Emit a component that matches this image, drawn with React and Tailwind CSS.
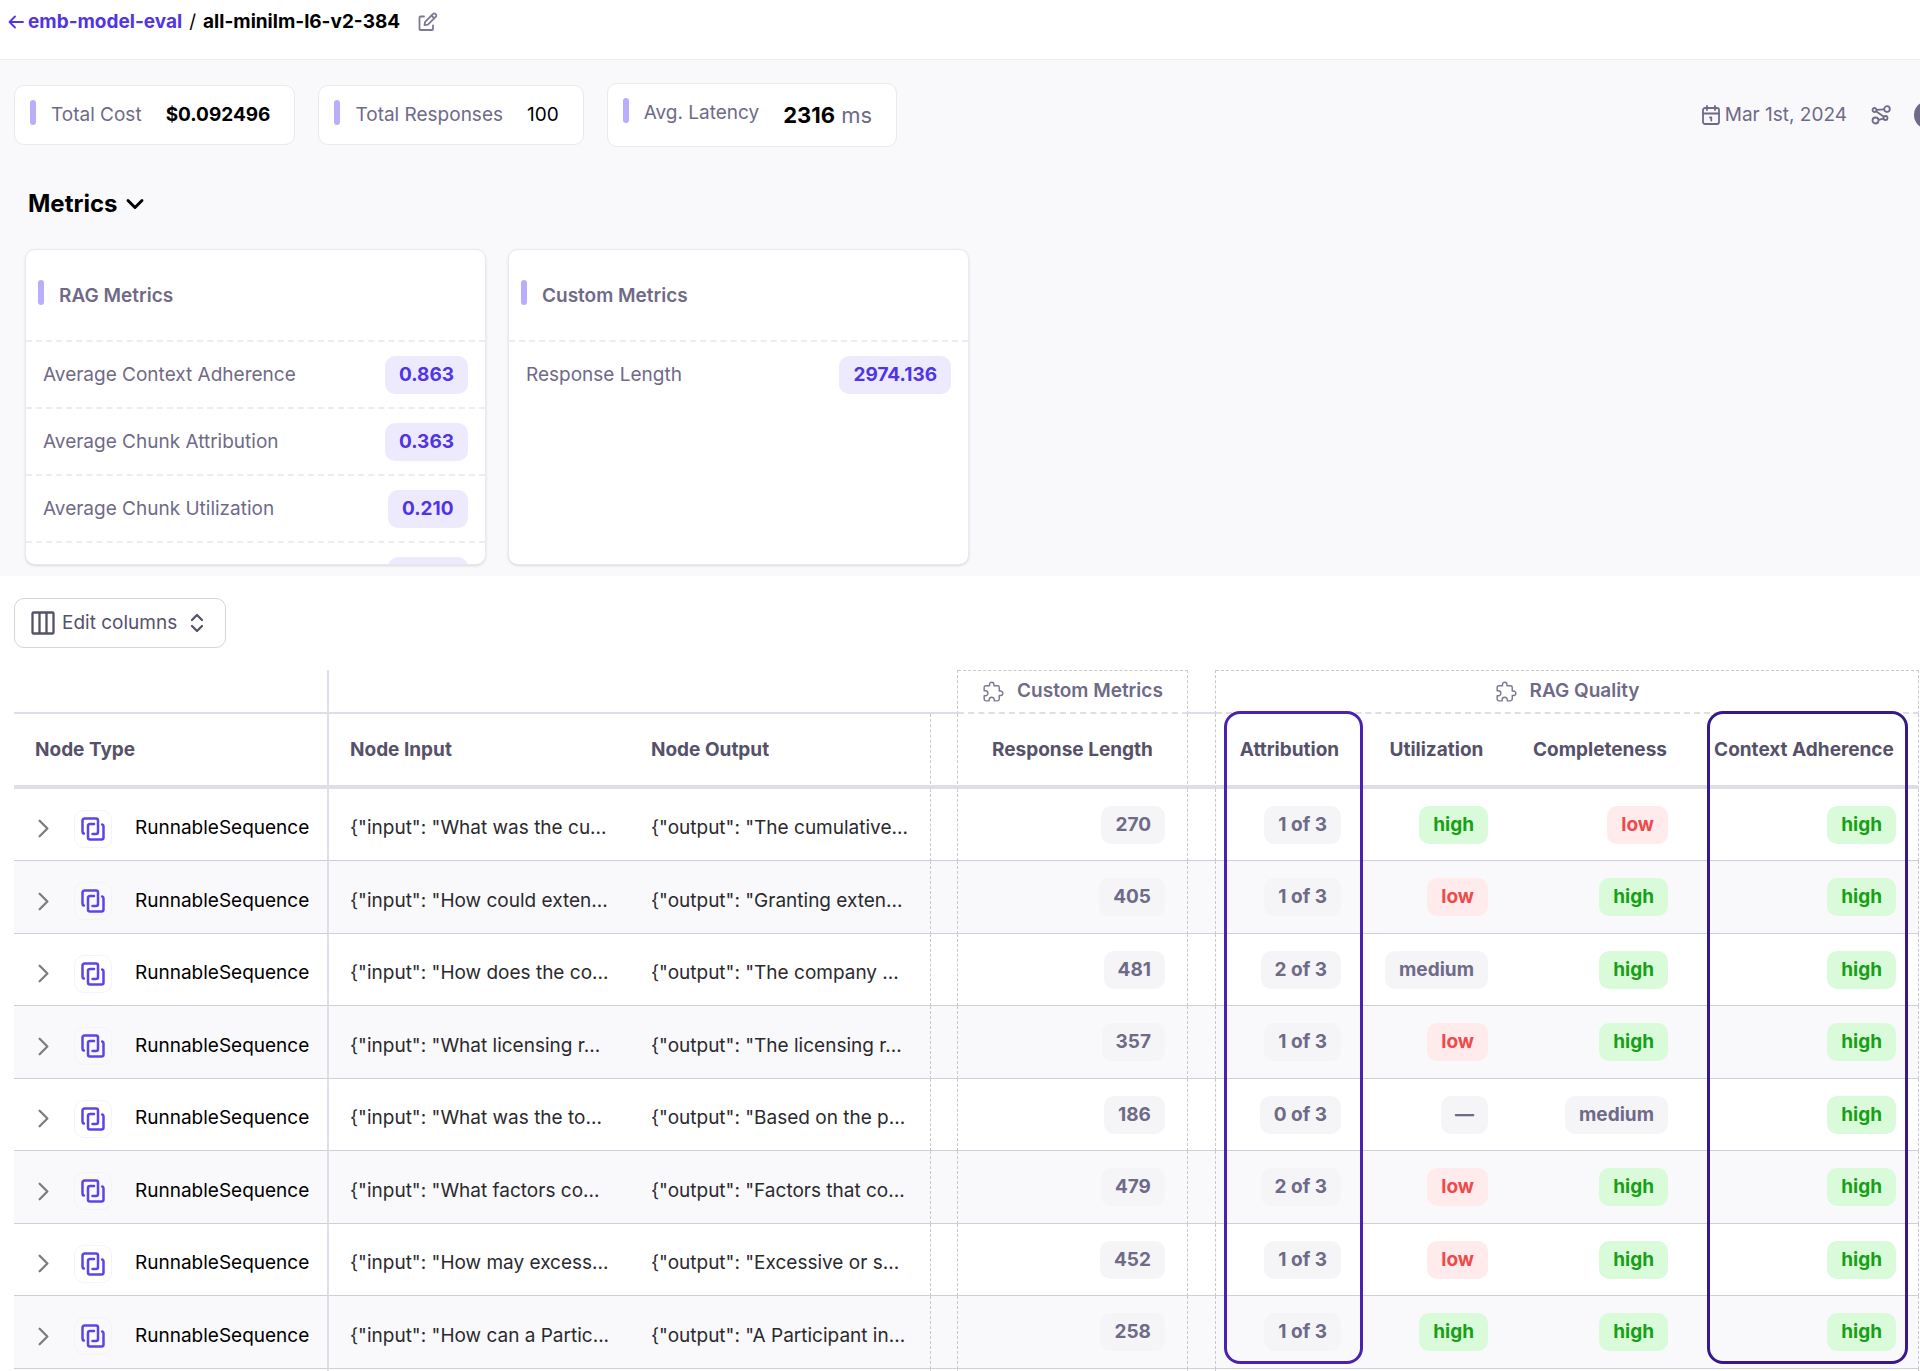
import React from 'react';
import { ChevronDown, ChevronRight, ChevronsUpDown } from 'lucide-react';
import { IoExtensionPuzzleOutline } from 'react-icons/io5';

const stats = [
  { label: 'Total Cost', value: '$0.092496', style: 'font-bold' },
  { label: 'Total Responses', value: '100', style: 'font-normal' },
];

const metricGroups = [
  {
    title: 'RAG Metrics',
    rows: [
      { label: 'Average Context Adherence', value: '0.863' },
      { label: 'Average Chunk Attribution', value: '0.363' },
      { label: 'Average Chunk Utilization', value: '0.210' },
      { label: '', value: '' },
    ],
  },
  {
    title: 'Custom Metrics',
    rows: [{ label: 'Response Length', value: '2974.136' }],
  },
];

const rows = [
  { input: '{"input": "What was the cu...', output: '{"output": "The cumulative...', length: '270', scores: ['1 of 3', 'high', 'low', 'high'] },
  { input: '{"input": "How could exten...', output: '{"output": "Granting exten...', length: '405', scores: ['1 of 3', 'low', 'high', 'high'] },
  { input: '{"input": "How does the co...', output: '{"output": "The company ...', length: '481', scores: ['2 of 3', 'medium', 'high', 'high'] },
  { input: '{"input": "What licensing r...', output: '{"output": "The licensing r...', length: '357', scores: ['1 of 3', 'low', 'high', 'high'] },
  { input: '{"input": "What was the to...', output: '{"output": "Based on the p...', length: '186', scores: ['0 of 3', '—', 'medium', 'high'] },
  { input: '{"input": "What factors co...', output: '{"output": "Factors that co...', length: '479', scores: ['2 of 3', 'low', 'high', 'high'] },
  { input: '{"input": "How may excess...', output: '{"output": "Excessive or s...', length: '452', scores: ['1 of 3', 'low', 'high', 'high'] },
  { input: '{"input": "How can a Partic...', output: '{"output": "A Participant in...', length: '258', scores: ['1 of 3', 'high', 'high', 'high'] },
];

const BackIcon = () => (
  <svg width="16" height="16" viewBox="0 0 16 16" fill="none" stroke="currentColor" strokeWidth="1.8" strokeLinecap="round" strokeLinejoin="round">
    <path d="M15 8H1.500M7 2.500L1.500 8L7 13.500" />
  </svg>
);

const EditIcon = () => (
  <svg width="20" height="20" viewBox="0 0 20 20" fill="none" stroke="currentColor" strokeWidth="1.8" strokeLinecap="round" strokeLinejoin="round">
    <path d="M6 4.5H2.5a1 1 0 0 0-1 1V17a1 1 0 0 0 1 1H14a1 1 0 0 0 1-1v-3.500" />
    <path d="M6.500 13.200l.6-3.400 8-8a1.500 1.500 0 0 1 2.200 0l.6.6a1.500 1.500 0 0 1 0 2.200l-8 8z" />
    <path d="M13.500 3.500l2.800 2.800" />
  </svg>
);

const CalendarIcon = () => (
  <svg width="18" height="20" viewBox="0 0 18 20" fill="none" stroke="currentColor" strokeWidth="1.800" strokeLinecap="round" strokeLinejoin="round">
    <rect x="1" y="3" width="16" height="16" rx="2" />
    <path d="M1 8.500h16M5 1v4M13 1v4M8 12.500h1.300v3" />
  </svg>
);

const NodesIcon = () => (
  <svg width="20" height="20" viewBox="0 0 20 20" fill="none" stroke="currentColor" strokeWidth="1.800">
    <circle cx="3.500" cy="5" r="2" />
    <circle cx="16" cy="4" r="2.800" />
    <circle cx="4.500" cy="15.500" r="3" />
    <circle cx="14.500" cy="13" r="2" />
    <path d="M5.500 4.900l7.700-.6M5 6.300l7.900 5.500M7.400 14.900l5.200-1.300" />
  </svg>
);

const ColumnsIcon = () => (
  <svg width="24" height="24" viewBox="0 0 24 24" fill="none" stroke="currentColor" strokeWidth="2.300">
    <rect x="1.500" y="1.500" width="21" height="21" rx="1" />
    <path d="M8.500 1.500v21M15.500 1.500v21" />
  </svg>
);

const ChainIcon = () => (
  <svg width="24" height="24" viewBox="0 0 24 24" fill="none" stroke="currentColor" strokeWidth="2.500" strokeLinecap="round" strokeLinejoin="round">
    <path d="M2.800 16.500A2 2 0 0 1 1.500 14.500V3.500a2 2 0 0 1 2-2h11.500a2 2 0 0 1 2 2v11.500a2 2 0 0 1-2 2h-3.500" />
    <path d="M13 7H9a2 2 0 0 0-2 2v11.500a2 2 0 0 0 2 2h11.500a2 2 0 0 0 2-2V9.500a2 2 0 0 0-1.300-2" />
  </svg>
);

const Bar = () => <span className="h-[25px] w-1.5 shrink-0 rounded-sm bg-[#b9aefb]" />;

const pillColors = {
  high: 'bg-[#dafbda] text-[#17a017]',
  low: 'bg-[#ffebeb] text-[#ef4a4a]',
};

const Pill = ({ children }) => (
  <span
    className={`inline-block h-[38px] rounded-[10px] px-3.5 leading-[38px] font-bold ${
      pillColors[children] || 'bg-[#f5f5f8] text-[#6f6a87]'
    }`}
  >
    {children}
  </span>
);

// Rounded frame that runs from a header cell down over the whole column
const Highlight = ({ className }) => (
  <span
    className={`pointer-events-none absolute -top-[3px] z-10 h-[653px] rounded-2xl border-[3px] ${className}`}
  />
);

const StatCard = ({ label, children }) => (
  <div className="flex items-start rounded-[10px] border border-[#e9e9ee] bg-white py-3.5 pr-6 pl-[15px]">
    <Bar />
    <span className="ml-[15px] leading-[30px] text-[#6f6a87]">{label}</span>
    <span className="ml-6">{children}</span>
  </div>
);

const GroupTitle = ({ children }) => (
  <span className="flex items-center justify-center gap-3">
    <IoExtensionPuzzleOutline size={23} className="opacity-90" />
    {children}
  </span>
);

const dashedRight = 'border-r border-r-[#c9c7d3] [border-right-style:dashed]';

const App = () => {
  return (
    <div className="overflow-hidden bg-white font-['Inter',sans-serif] text-[19px] text-black">
      <header className="flex h-[60px] items-start border-b border-[#ececf0] pt-2 pl-2 leading-7">
        <a href="#" className="flex items-center gap-1 font-bold text-[#5034e6]">
          <BackIcon />
          emb-model-eval
        </a>
        <span className="mx-[7px]">/</span>
        <h1 className="font-bold">all-minilm-l6-v2-384</h1>
        <button aria-label="Rename run" className="ml-[18px] flex h-7 items-center text-[#7d7894]">
          <EditIcon />
        </button>
      </header>

      <section className="bg-[#f9f9fb] pb-[11px]">
        <div className="flex items-center justify-between pt-[23px] pl-3.5">
          <div className="flex items-center gap-[23px]">
            {stats.map((s) => (
              <StatCard key={s.label} label={s.label}>
                <span className={`block leading-[30px] ${s.style}`}>{s.value}</span>
              </StatCard>
            ))}
            <StatCard label="Avg. Latency">
              <span className="block text-[22px] leading-[34px] text-[#6f6a87]">
                <b className="font-bold text-black">2316</b> ms
              </span>
            </StatCard>
          </div>
          <div className="flex items-center text-[#6f6a87]">
            <CalendarIcon />
            <span className="ml-[5px]">Mar 1st, 2024</span>
            <button aria-label="View graph" className="ml-6">
              <NodesIcon />
            </button>
            <span className="-mr-[22px] ml-[23px] size-7 rounded-full bg-[#6f6a87]" />
          </div>
        </div>

        <button className="mt-10 ml-7 flex items-center gap-1 text-2xl leading-[34px] font-bold">
          Metrics <ChevronDown size={28} strokeWidth={2.5} />
        </button>

        <div className="mt-7 flex gap-[22px] pl-[25px]">
          {metricGroups.map((group) => (
            <div
              key={group.title}
              className="h-[316px] w-[461px] overflow-hidden rounded-[10px] border border-[#e9e9ee] bg-white shadow-sm"
            >
              <div className="flex h-[90px] items-start pt-[30px] pl-3">
                <Bar />
                <h2 className="ml-[15px] leading-8 font-semibold text-[#6f6a87]">{group.title}</h2>
              </div>
              {group.rows.map((r) => (
                <div
                  key={r.label}
                  className="flex h-[67px] items-center justify-between border-t-2 border-dashed border-[#ededf0] px-[17px] text-[#6f6a87]"
                >
                  <span className="pt-0.5">{r.label}</span>
                  <span className="h-[38px] min-w-20 rounded-[10px] bg-[#edeafd] px-3.5 leading-[38px] font-bold text-[#5034e6]">
                    {r.value}
                  </span>
                </div>
              ))}
            </div>
          ))}
        </div>
      </section>

      <section className="pt-[22px] pr-px pl-3.5">
        <button className="flex h-[50px] items-center rounded-[10px] border border-[#d6d5de] pr-4 pl-4 text-[#565169]">
          <ColumnsIcon />
          <span className="mr-2 ml-[7px]">Edit columns</span>
          <ChevronsUpDown size={24} strokeWidth={2.25} />
        </button>

        <table className="mt-[22px] w-full table-fixed border-separate border-spacing-0 text-left">
          <colgroup>
            <col className="w-[315px]" />
            <col />
            <col />
            <col className="w-[27px]" />
            <col className="w-[230px]" />
            <col className="w-7" />
            <col className="w-[147px]" />
            <col className="w-[147px]" />
            <col className="w-[180px]" />
            <col className="w-[229px]" />
          </colgroup>
          <thead className="text-[#565169]">
            <tr className="h-11 text-[#6f6a87] *:border-b-2 *:border-b-[#dfdee6]">
              <td className="border-r-2 border-r-[#dfdee6]" />
              <td colSpan={2} />
              <td className={dashedRight} />
              <th className={`border-t border-t-[#c9c7d3] border-dashed p-0 font-semibold ${dashedRight}`}>
                <GroupTitle>Custom Metrics</GroupTitle>
              </th>
              <td className={dashedRight} />
              <th
                colSpan={4}
                className={`border-t border-t-[#c9c7d3] border-dashed p-0 font-semibold ${dashedRight}`}
              >
                <GroupTitle>RAG Quality</GroupTitle>
              </th>
            </tr>
            <tr className="h-[75px] *:border-b-4 *:border-b-[#dfdee6] *:px-0 *:pt-0.5 *:pb-0 *:font-bold *:whitespace-nowrap">
              <th className="border-r-2 border-r-[#dfdee6]">
                <span className="pl-[21px]">Node Type</span>
              </th>
              <th>
                <span className="pl-[21px]">Node Input</span>
              </th>
              <th className={dashedRight}>
                <span className="pl-[21px]">Node Output</span>
              </th>
              <td className={dashedRight} />
              <th className={`text-center ${dashedRight}`}>Response Length</th>
              <td className={dashedRight} />
              <th className="relative text-center">
                Attribution
                <Highlight className="right-0 left-2 border-[#4b22b0]" />
              </th>
              <th className="text-center">Utilization</th>
              <th className="text-center">Completeness</th>
              <th className={`relative text-center ${dashedRight}`}>
                Context Adherence
                <Highlight className="right-2.5 left-[17px] border-[#36198c]" />
              </th>
            </tr>
          </thead>
          <tbody>
            {rows.map((row) => (
              <tr
                key={row.input}
                className="h-[72px] even:h-[73px] even:bg-[#f9f9fb] *:border-b *:border-b-[#d0cfd9] *:py-0"
              >
                <td className="border-r-2 border-r-[#dfdee6] pl-3.5">
                  <div className="flex items-center pt-2">
                    <button aria-label="Expand row" className="text-[#7b7b80]">
                      <ChevronRight size={31} strokeWidth={1.75} />
                    </button>
                    <span className="ml-[15px] flex size-[38px] items-center justify-center rounded-[10px] border border-[#f4f3fb] text-[#5b45ea]">
                      <ChainIcon />
                    </span>
                    <span className="ml-[23px]">RunnableSequence</span>
                  </div>
                </td>
                <td className="pl-[21px] whitespace-nowrap text-[#2a2a2e]">
                  <div className="pt-2">{row.input}</div>
                </td>
                <td className={`pl-[21px] whitespace-nowrap text-[#2a2a2e] ${dashedRight}`}>
                  <div className="pt-2">{row.output}</div>
                </td>
                <td className={dashedRight} />
                <td className={`pr-[22px] text-right ${dashedRight}`}>
                  <Pill>{row.length}</Pill>
                </td>
                <td className={dashedRight} />
                {row.scores.map((score, i) => (
                  <td
                    key={i}
                    className={`pr-[22px] text-right ${i === row.scores.length - 1 ? dashedRight : ''}`}
                  >
                    <Pill>{score}</Pill>
                  </td>
                ))}
              </tr>
            ))}
          </tbody>
          <tfoot>
            <tr className="h-0.5 *:p-0">
              <td className="border-r-2 border-r-[#dfdee6]" />
              <td />
              <td className={dashedRight} />
              <td className={dashedRight} />
              <td className={dashedRight} />
              <td className={dashedRight} />
              <td colSpan={4} className={dashedRight} />
            </tr>
          </tfoot>
        </table>
      </section>
    </div>
  );
};

export default App;
